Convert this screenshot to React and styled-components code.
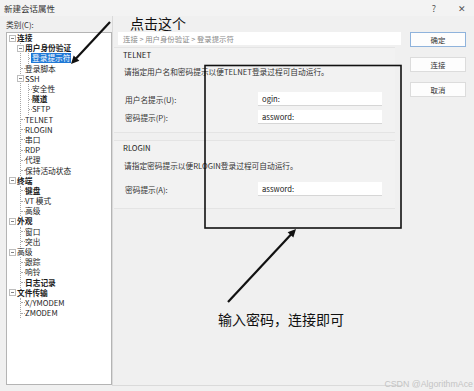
import React from "react";
import styled, { createGlobalStyle } from "styled-components";

const GlobalStyle = createGlobalStyle`
  html, body { margin: 0; padding: 0; background: #f0f0f0; overflow: hidden; }
  * { box-sizing: border-box; }
`;

const UI_FONT = `"Noto Sans CJK SC", "Noto Sans", sans-serif`;

const Window = styled.div`
  position: relative;
  width: 474px;
  height: 391px;
  background: #f0f0f0;
  font-family: ${UI_FONT};
  color: #222;
  display: flex;
  flex-direction: column;
  overflow: hidden;
`;

const TitleBar = styled.div`
  height: 16px;
  display: flex;
  align-items: center;
  justify-content: space-between;
  padding: 0 8px 0 4px;
  font-size: 8.5px;
  color: #333;
  background: #f3f3f3;
`;

const TitleButtons = styled.div`
  display: flex;
  gap: 22px;
  font-size: 9px;
  color: #555;
`;

const Body = styled.div`
  flex: 1;
  display: grid;
  grid-template-columns: 106px 291px 71px;
  padding-left: 6px;
`;

const Sidebar = styled.div`
  display: flex;
  flex-direction: column;
`;

const CatLabel = styled.div`
  height: 16px;
  line-height: 17px;
  font-size: 7.7px;
  color: #333;
`;

const TreeBox = styled.div`
  height: 353px;
  background: #fff;
  border: 1px solid #b4b4b4;
  font-size: 7.7px;
  color: #1a1a1a;
  overflow: hidden;
`;

const Row = styled.div`
  height: 10.2px;
  display: flex;
  align-items: center;
  white-space: nowrap;
  padding-left: ${(p) => (p.$root ? 2 : 0)}px;
`;

const Expander = styled.span`
  position: relative;
  flex: none;
  width: 7px;
  height: 7px;
  border: 1px solid #bdbdbd;
  background: #fff;
  margin: ${(p) => (p.$root ? "0 1px 0 0" : "0 1px 0 -4px")};
  &::after {
    content: "";
    position: absolute;
    left: 1px;
    right: 1px;
    top: 2px;
    height: 1px;
    background: #808080;
  }
`;

const Tick = styled.span`
  flex: none;
  width: ${(p) => p.$w}px;
  border-top: 1px dotted #a8a8a8;
`;

const Label = styled.span`
  font-weight: ${(p) => (p.$bold ? 700 : 400)};
  line-height: 10px;
  padding: 0 1px;
  margin-left: -1px;
  background: ${(p) => (p.$selected ? "#1f78d6" : "transparent")};
  color: ${(p) => (p.$selected ? "#fff" : "inherit")};
`;

const Children = styled.div`
  margin-left: ${(p) => p.$indent}px;
  border-left: 1px dotted #a8a8a8;
`;

const Panel = styled.div`
  padding-top: 16px;
  border-left: 1px solid #dadada;
  border-bottom: 1px solid #dadada;
  height: 370px;
  display: flex;
  flex-direction: column;
`;

const Breadcrumb = styled.div`
  margin: 0 2px 0 5px;
  height: 13px;
  background: #fff;
  font-size: 7.4px;
  color: #8a8a8a;
  display: flex;
  align-items: center;
  padding-left: 5px;
`;

const Section = styled.div`
  margin: ${(p) => p.$top}px 8px 0 1px;
  padding: 2px 0 ${(p) => p.$bottom}px 9px;
  background: #f2f2f2;
  border-top: 1px solid #e4e4e4;
  border-bottom: 1px solid #e4e4e4;
  font-size: 7.7px;
  display: flex;
  flex-direction: column;
`;

const SectionTitle = styled.div`
  height: 10px;
  line-height: 10px;
  color: #222;
`;

const Desc = styled.div`
  height: 10px;
  line-height: 10px;
  margin-top: ${(p) => p.$top}px;
  padding-left: 1px;
  color: #333;
  white-space: nowrap;
`;

const FieldRow = styled.div`
  display: flex;
  align-items: center;
  height: 14px;
  margin-top: ${(p) => p.$top}px;
`;

const FieldLabel = styled.div`
  width: 135px;
  padding-left: 2px;
  color: #333;
`;

const Input = styled.div`
  width: 124px;
  height: 14px;
  background: #fff;
  border-bottom: 1px solid #d6d6d6;
  padding-left: 4px;
  line-height: 13px;
  color: #222;
`;

const ButtonCol = styled.div`
  padding: 16px 0 0 7px;
  display: flex;
  flex-direction: column;
  gap: 10px;
`;

const Button = styled.div`
  width: 56px;
  height: 15px;
  background: #fdfdfd;
  border: 1px solid ${(p) => (p.$primary ? "#8fb3dc" : "#dcdcdc")};
  font-size: 7.4px;
  color: #333;
  display: flex;
  align-items: center;
  justify-content: center;
`;

const Watermark = styled.div`
  position: absolute;
  right: 1px;
  bottom: 2px;
  font-family: "Liberation Sans", Arial, sans-serif;
  font-size: 8.8px;
  color: #c4c4c4;
`;

const Overlay = styled.svg`
  position: absolute;
  left: 0;
  top: 0;
  pointer-events: none;
`;

const Note = styled.div`
  position: absolute;
  left: ${(p) => p.$x}px;
  top: ${(p) => p.$y}px;
  font-size: 14px;
  line-height: 14px;
  color: #111;
  white-space: nowrap;
`;

const tree = [
  {
    label: "连接",
    bold: true,
    children: [
      { label: "用户身份验证", bold: true, children: [{ label: "登录提示符", selected: true }] },
      { label: "登录脚本" },
      { label: "SSH", children: [{ label: "安全性" }, { label: "隧道", bold: true }, { label: "SFTP" }] },
      { label: "TELNET" },
      { label: "RLOGIN" },
      { label: "串口" },
      { label: "RDP" },
      { label: "代理" },
      { label: "保持活动状态" },
    ],
  },
  { label: "终端", bold: true, children: [{ label: "键盘", bold: true }, { label: "VT 模式" }, { label: "高级" }] },
  { label: "外观", bold: true, children: [{ label: "窗口" }, { label: "突出" }] },
  { label: "高级", children: [{ label: "跟踪" }, { label: "响铃" }, { label: "日志记录", bold: true }] },
  { label: "文件传输", bold: true, children: [{ label: "X/YMODEM" }, { label: "ZMODEM" }] },
];

const TreeNode = ({ node, level }) => {
  const root = level === 0;
  return (
    <>
      <Row $root={root}>
        {node.children ? <Expander $root={root} /> : <Tick $w={level === 1 ? 4 : 3} />}
        <Label $bold={node.bold} $selected={node.selected}>
          {node.label}
        </Label>
      </Row>
      {node.children && (
        <Children $indent={root ? 13 : 7}>
          {node.children.map((c) => (
            <TreeNode key={c.label} node={c} level={level + 1} />
          ))}
        </Children>
      )}
    </>
  );
};

const Arrow = ({ x1, y1, x2, y2 }) => {
  const a = Math.atan2(y2 - y1, x2 - x1);
  const len = 9;
  const w = 0.45;
  const p1 = [x2 - len * Math.cos(a - w), y2 - len * Math.sin(a - w)];
  const p2 = [x2 - len * Math.cos(a + w), y2 - len * Math.sin(a + w)];
  const bx = x2 - 6 * Math.cos(a);
  const by = y2 - 6 * Math.sin(a);
  return (
    <g>
      <line x1={x1} y1={y1} x2={bx} y2={by} stroke="#111" strokeWidth="2.2" />
      <polygon points={`${x2},${y2} ${p1.join(",")} ${p2.join(",")}`} fill="#111" />
    </g>
  );
};

export default function App() {
  return (
    <Window>
      <GlobalStyle />
      <TitleBar>
        <span>新建会话属性</span>
        <TitleButtons>
          <span>?</span>
          <span>✕</span>
        </TitleButtons>
      </TitleBar>
      <Body>
        <Sidebar>
          <CatLabel>类别(C):</CatLabel>
          <TreeBox>
            {tree.map((n) => (
              <TreeNode key={n.label} node={n} level={0} />
            ))}
          </TreeBox>
        </Sidebar>
        <Panel>
          <Breadcrumb>连接 &gt; 用户身份验证 &gt; 登录提示符</Breadcrumb>
          <Section $top={2} $bottom={8}>
            <SectionTitle>TELNET</SectionTitle>
            <Desc $top={7}>请指定用户名和密码提示以便TELNET登录过程可自动运行。</Desc>
            <FieldRow $top={15}>
              <FieldLabel>用户名提示(U):</FieldLabel>
              <Input>ogin:</Input>
            </FieldRow>
            <FieldRow $top={4}>
              <FieldLabel>密码提示(P):</FieldLabel>
              <Input>assword:</Input>
            </FieldRow>
          </Section>
          <Section $top={7} $bottom={12}>
            <SectionTitle>RLOGIN</SectionTitle>
            <Desc $top={8}>请指定密码提示以便RLOGIN登录过程可自动运行。</Desc>
            <FieldRow $top={11}>
              <FieldLabel>密码提示(A):</FieldLabel>
              <Input>assword:</Input>
            </FieldRow>
          </Section>
        </Panel>
        <ButtonCol>
          <Button $primary>确定</Button>
          <Button>连接</Button>
          <Button>取消</Button>
        </ButtonCol>
      </Body>
      <Watermark>CSDN @AlgorithmAce</Watermark>
      <Overlay width="474" height="391" viewBox="0 0 474 391">
        <rect x="205" y="65.5" width="196" height="162.5" fill="none" stroke="#111" strokeWidth="1.6" />
        <Arrow x1={110} y1={22} x2={71} y2={64} />
        <Arrow x1={228} y1={302} x2={296} y2={229} />
      </Overlay>
      <Note $x={130} $y={16}>点击这个</Note>
      <Note $x={218} $y={312}>输入密码，连接即可</Note>
    </Window>
  );
}
